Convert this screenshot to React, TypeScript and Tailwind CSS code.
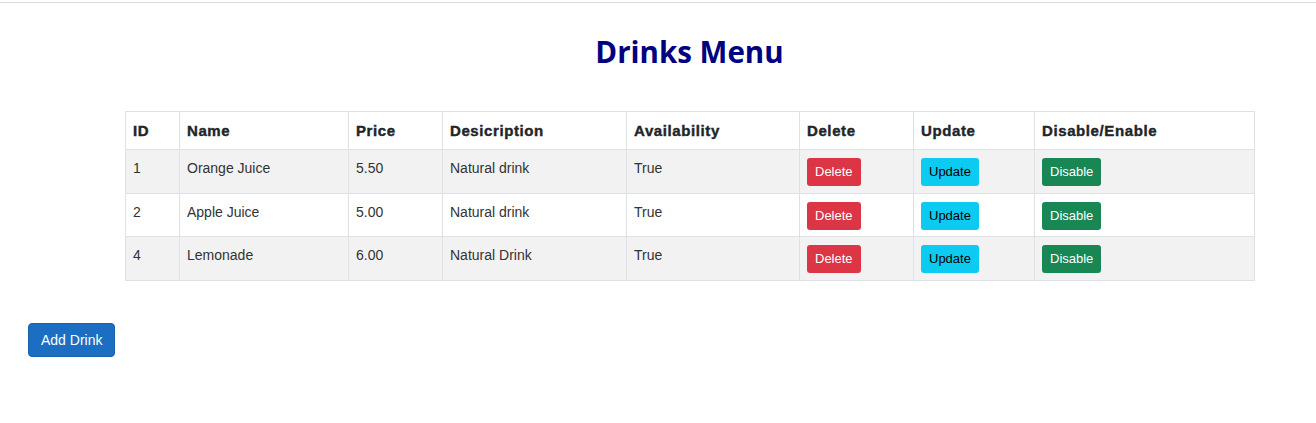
import React from "react";

const rows = [
  { id: "1", name: "Orange Juice", price: "5.50", desc: "Natural drink", avail: "True" },
  { id: "2", name: "Apple Juice", price: "5.00", desc: "Natural drink", avail: "True" },
  { id: "4", name: "Lemonade", price: "6.00", desc: "Natural Drink", avail: "True" },
];

const headers = ["ID", "Name", "Price", "Desicription", "Availability", "Delete", "Update", "Disable/Enable"];
const widths = ["w-[54px]", "w-[169px]", "w-[94px]", "w-[184px]", "w-[173px]", "w-[114px]", "w-[121px]", "w-[220px]"];

export default function App() {
  return (
    <div className="min-h-[423px] bg-white font-['Liberation_Sans',Arial,sans-serif] text-[14px] leading-[20px] text-[#212529]">
      <div className="pt-[2px]">
        <div className="h-px bg-[#d9d9d9]" />
      </div>
      <div className="ml-[125px] w-[1129px]">
        <h1 className="pt-[27px] pb-[37px] text-center font-['Open_Sans',sans-serif] text-[29.5px] font-bold leading-[44px] text-[#000080]">
          Drinks Menu
        </h1>
        <table className="w-[1129px] table-fixed border-collapse">
          <colgroup>
            {widths.map((w, i) => (
              <col key={i} className={w} />
            ))}
          </colgroup>
          <thead>
            <tr>
              {headers.map((h) => (
                <th
                  key={h}
                  className="border border-[#dee2e6] pl-[7px] pr-2 pt-[9px] pb-2 text-left text-[15px] font-bold tracking-[0.6px] text-[#212529] [-webkit-text-stroke:0.4px_#212529]"
                >
                  {h}
                </th>
              ))}
            </tr>
          </thead>
          <tbody>
            {rows.map((r, i) => {
              const cell =
                "border border-[#dee2e6] pl-[7px] pr-2 pt-2 align-top " + (i === 1 ? "pb-[6px]" : "pb-[7px]");
              return (
                <tr key={r.id} className={i % 2 === 0 ? "bg-[#f2f2f2]" : "bg-white"}>
                  <td className={cell + " text-[#333]"}>{r.id}</td>
                  <td className={cell + " text-[#333]"}>{r.name}</td>
                  <td className={cell + " text-[#333]"}>{r.price}</td>
                  <td className={cell + " text-[#333]"}>{r.desc}</td>
                  <td className={cell + " text-[#333]"}>{r.avail}</td>
                  <td className={cell}>
                    <button className="block h-[28px] rounded-[3px] bg-[#dc3545] px-2 text-[13px] leading-[18px] text-white">
                      Delete
                    </button>
                  </td>
                  <td className={cell}>
                    <button className="block h-[28px] rounded-[3px] bg-[#0dcaf0] px-2 text-[13px] leading-[18px] text-black">
                      Update
                    </button>
                  </td>
                  <td className={cell}>
                    <button className="block h-[28px] rounded-[3px] bg-[#198754] px-2 text-[13px] leading-[18px] text-white">
                      Disable
                    </button>
                  </td>
                </tr>
              );
            })}
          </tbody>
        </table>
      </div>
      <div className="ml-[28px] mt-[42px]">
        <button className="h-[34px] rounded-[4px] border border-[#1861ac] bg-[#1b6ec2] px-3 text-[14px] leading-[20px] text-white">
          Add Drink
        </button>
      </div>
    </div>
  );
}
